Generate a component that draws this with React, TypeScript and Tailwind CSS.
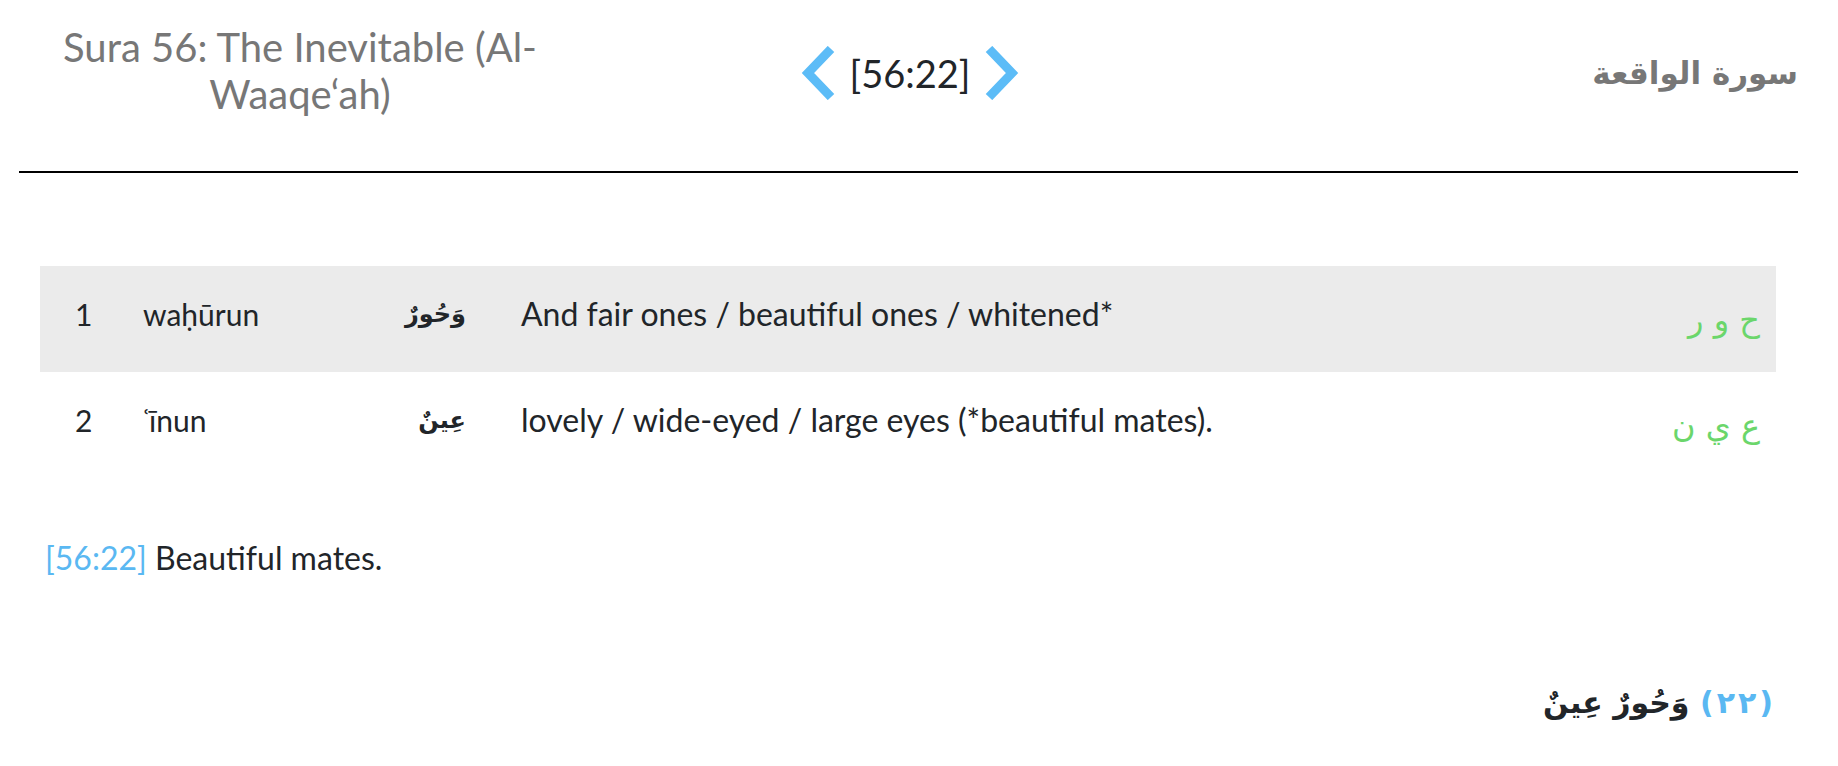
import React from "react";

type Word = {
  n: number;
  translit: string;
  arabic: string;
  meaning: string;
  root: string;
};

const words: Word[] = [
  {
    n: 1,
    translit: "waḥūrun",
    arabic: "وَحُورٌ",
    meaning: "And fair ones / beautiful ones / whitened*",
    root: "ح و ر",
  },
  {
    n: 2,
    translit: "ʿīnun",
    arabic: "عِينٌ",
    meaning: "lovely / wide-eyed / large eyes (*beautiful mates).",
    root: "ع ي ن",
  },
];

const Chevron = ({ dir }: { dir: "left" | "right" }) => (
  <svg width="35" height="54" viewBox="0 0 35 54" className="shrink-0">
    <polyline
      points={dir === "left" ? "30,3 7,27 30,51" : "5,3 28,27 5,51"}
      fill="none"
      stroke="#5cbcf7"
      strokeWidth="9"
      strokeLinecap="butt"
      strokeLinejoin="miter"
    />
  </svg>
);

const App: React.FC = () => {
  const latin = "font-['Lato','Liberation_Sans',sans-serif]";
  const arabicFont = "font-['DejaVu_Sans',sans-serif]";

  //render
  return (
    <div className={`min-h-screen w-full bg-white text-[#212529] ${latin}`}>
      <div className="ml-[19px] mr-[40px]">
        <header className="grid h-[173px] grid-cols-[562px_1fr_559px] items-center border-b-2 border-black pb-[25px]">
          <h1 className="-mt-[4px] text-center text-[40px] leading-[47px] font-normal text-[#777777]">
            Sura 56: The Inevitable (Al-
            <br />
            Waaqe‘ah)
          </h1>
          <nav className="flex items-center justify-center gap-[14px]">
            <Chevron dir="left" />
            <span className="text-[38px] leading-none">[56:22]</span>
            <Chevron dir="right" />
          </nav>
          <div
            dir="rtl"
            className={`text-right text-[31px] font-bold text-[#777777] ${arabicFont}`}
          >
            سورة الواقعة
          </div>
        </header>

        <section className="mt-[93px] ml-[21px] mr-[22px]">
          {words.map((w, i) => (
            <div
              key={w.n}
              className={`flex h-[106px] items-center pb-[10px] pl-[35px] pr-[16px] ${
                i % 2 === 0 ? "bg-[#ebebeb]" : "bg-white"
              }`}
            >
              <div className="w-[68px] text-[30px]">{w.n}</div>
              <div className="w-[215px] text-[30px]">{w.translit}</div>
              <div
                dir="rtl"
                className={`w-[108px] text-right text-[24px] font-bold ${arabicFont}`}
              >
                {w.arabic}
              </div>
              <div className="ml-[55px] flex-1 text-[32px]">{w.meaning}</div>
              <div
                dir="rtl"
                className={`pt-[12px] text-right text-[32px] text-[#6bd66b] ${arabicFont}`}
              >
                {w.root}
              </div>
            </div>
          ))}
        </section>

        <p className="mt-[56px] ml-[26px] text-[32px]">
          <span className="text-[#5ab8f2]">[56:22]</span> Beautiful mates.
        </p>

        <div
          dir="rtl"
          className={`mt-[98px] mr-[25px] text-right text-[30px] font-bold ${arabicFont}`}
        >
          <span className="text-[#5ab8f2]">
            (<span className="mx-[3px]">٢</span>
            <span className="mr-[3px]">٢</span>)
          </span>{" "}
          وَحُورٌ عِينٌ
        </div>
      </div>
    </div>
  );
};

export default App;
